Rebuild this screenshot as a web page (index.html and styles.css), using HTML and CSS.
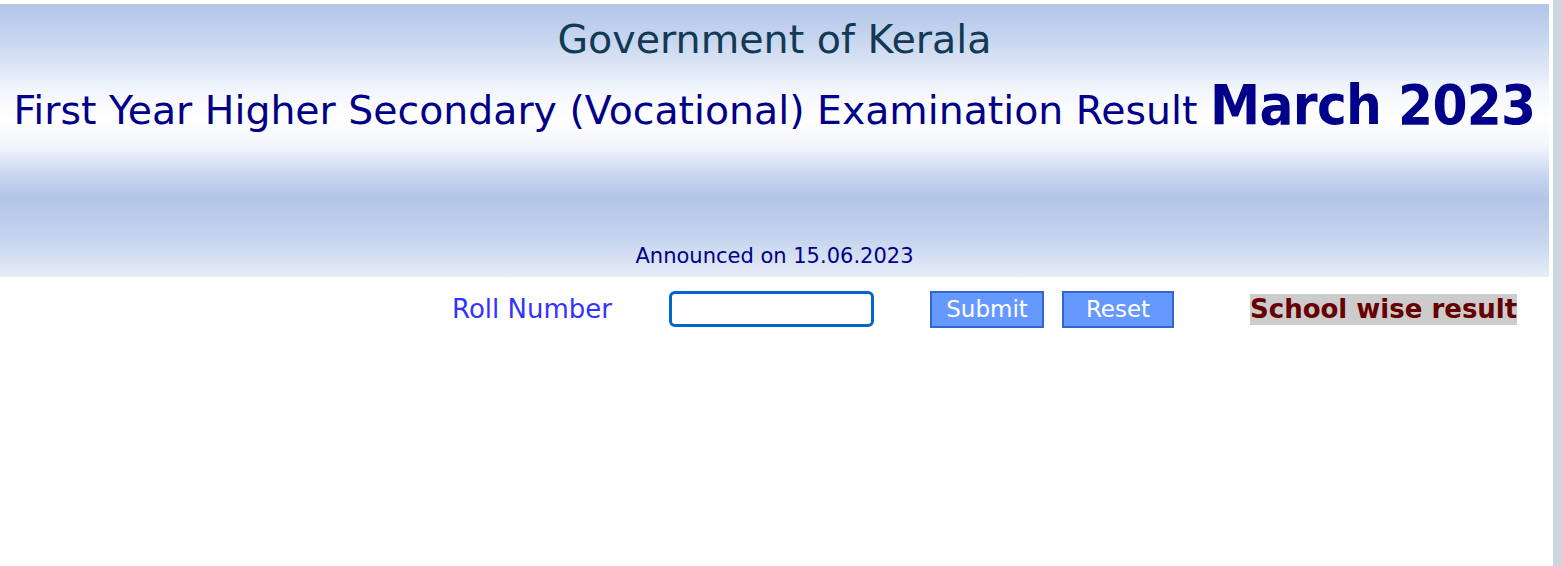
FILE: index.html
```html
<!DOCTYPE html>
<html lang="en">
<head>
<meta charset="utf-8">
<title>Higher Secondary (Vocational) Examination Result</title>
<link rel="stylesheet" href="styles.css">
</head>
<body>
<div class="page">
  <div class="main">
    <header class="banner">
      <h2 class="gov">Government of Kerala</h2>
      <h1 class="title">First Year Higher Secondary (Vocational) Examination Result <span class="month">March 2023</span></h1>
      <p class="announced">Announced on 15.06.2023</p>
    </header>
    <form class="search" onsubmit="return false">
      <label class="roll-label" for="roll">Roll Number</label>
      <input class="roll-input" id="roll" type="text">
      <button class="btn btn-submit" type="submit">Submit</button>
      <button class="btn btn-reset" type="reset">Reset</button>
      <a class="school-link" href="#">School wise result</a>
    </form>
  </div>
  <div class="side-strip"></div>
</div>
</body>
</html>
```

FILE: styles.css
```css
html, body {
  margin: 0;
  padding: 0;
  background: #ffffff;
  height: 100%;
}

.page {
  display: flex;
  height: 100%;
}

.main {
  flex: 1;
  padding-top: 4px;
  margin-right: 4px;
}

.side-strip {
  width: 9px;
  background: #cdd3df;
}

.banner {
  height: 273px;
  background: linear-gradient(to bottom,
    #b2c5e8 0%,
    #c9d7f0 14%,
    #f3f6fc 32%,
    #ffffff 42%,
    #f2f5fb 52%,
    #c8d5ef 63%,
    #b2c5e8 71%,
    #c6d4ee 86%,
    #e7edf8 100%);
  text-align: center;
  font-family: "DejaVu Sans", sans-serif;
  display: flex;
  flex-direction: column;
  align-items: center;
}

.gov {
  margin: 11px 0 0;
  font-size: 39.6px;
  font-weight: normal;
  line-height: 48px;
  color: #133a55;
}

.title {
  margin: 10px 0 0;
  font-size: 39.4px;
  font-weight: normal;
  line-height: 64px;
  color: #000088;
  white-space: nowrap;
}

.month {
  font-family: "DejaVu Sans Condensed", "DejaVu Sans", sans-serif;
  font-size: 56px;
  font-weight: bold;
  letter-spacing: -0.7px;
}

.announced {
  margin: auto 0 8px;
  font-size: 21px;
  line-height: 26px;
  color: #000088;
}

.search {
  display: flex;
  align-items: center;
  height: 64px;
  padding-left: 452px;
  font-family: "DejaVu Sans", sans-serif;
}

.roll-label {
  width: 217px;
  font-size: 26px;
  color: #3333ff;
}

.roll-input {
  box-sizing: border-box;
  width: 205px;
  height: 36px;
  border: 3px solid #0066cc;
  border-radius: 6px;
  outline: none;
  padding: 0 6px;
  font-size: 18px;
  margin-right: 56px;
}

.btn {
  box-sizing: border-box;
  height: 37px;
  padding: 0;
  background: #6699ff;
  border: 2px solid #3366cc;
  color: #ffffff;
  font-family: "DejaVu Sans", sans-serif;
  font-size: 23px;
  margin-right: 18px;
}

.btn-submit {
  width: 114px;
}

.btn-reset {
  width: 112px;
  margin-right: 76px;
}

.school-link {
  background: #cccccc;
  color: #660000;
  font-family: "DejaVu Sans", sans-serif;
  font-weight: bold;
  font-size: 26px;
  line-height: 31px;
  text-decoration: none;
}
```
